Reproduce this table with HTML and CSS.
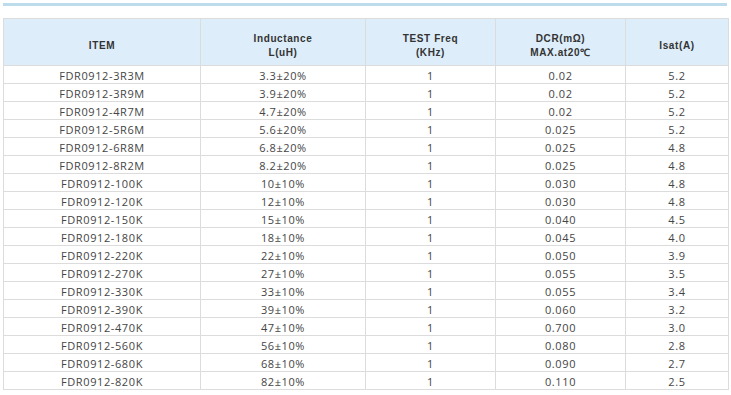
FILE: index.html
```html
<!DOCTYPE html>
<html>
<head>
<meta charset="utf-8">
<link rel="stylesheet" href="styles.css">
</head>
<body>
<div class="page">
  <div class="topline"></div>
  <table class="spec">
    <colgroup>
      <col class="c1"><col class="c2"><col class="c3"><col class="c4"><col class="c5">
    </colgroup>
    <thead>
      <tr>
        <th>ITEM</th>
        <th>Inductance<br>L(uH)</th>
        <th>TEST Freq<br>(KHz)</th>
        <th>DCR(m&Omega;)<br>MAX.at20&#8451;</th>
        <th>Isat(A)</th>
      </tr>
    </thead>
    <tbody>
      <tr><td>FDR0912-3R3M</td><td>3.3±20%</td><td>1</td><td>0.02</td><td>5.2</td></tr>
      <tr><td>FDR0912-3R9M</td><td>3.9±20%</td><td>1</td><td>0.02</td><td>5.2</td></tr>
      <tr><td>FDR0912-4R7M</td><td>4.7±20%</td><td>1</td><td>0.02</td><td>5.2</td></tr>
      <tr><td>FDR0912-5R6M</td><td>5.6±20%</td><td>1</td><td>0.025</td><td>5.2</td></tr>
      <tr><td>FDR0912-6R8M</td><td>6.8±20%</td><td>1</td><td>0.025</td><td>4.8</td></tr>
      <tr><td>FDR0912-8R2M</td><td>8.2±20%</td><td>1</td><td>0.025</td><td>4.8</td></tr>
      <tr><td>FDR0912-100K</td><td>10±10%</td><td>1</td><td>0.030</td><td>4.8</td></tr>
      <tr><td>FDR0912-120K</td><td>12±10%</td><td>1</td><td>0.030</td><td>4.8</td></tr>
      <tr><td>FDR0912-150K</td><td>15±10%</td><td>1</td><td>0.040</td><td>4.5</td></tr>
      <tr><td>FDR0912-180K</td><td>18±10%</td><td>1</td><td>0.045</td><td>4.0</td></tr>
      <tr><td>FDR0912-220K</td><td>22±10%</td><td>1</td><td>0.050</td><td>3.9</td></tr>
      <tr><td>FDR0912-270K</td><td>27±10%</td><td>1</td><td>0.055</td><td>3.5</td></tr>
      <tr><td>FDR0912-330K</td><td>33±10%</td><td>1</td><td>0.055</td><td>3.4</td></tr>
      <tr><td>FDR0912-390K</td><td>39±10%</td><td>1</td><td>0.060</td><td>3.2</td></tr>
      <tr><td>FDR0912-470K</td><td>47±10%</td><td>1</td><td>0.700</td><td>3.0</td></tr>
      <tr><td>FDR0912-560K</td><td>56±10%</td><td>1</td><td>0.080</td><td>2.8</td></tr>
      <tr><td>FDR0912-680K</td><td>68±10%</td><td>1</td><td>0.090</td><td>2.7</td></tr>
      <tr><td>FDR0912-820K</td><td>82±10%</td><td>1</td><td>0.110</td><td>2.5</td></tr>
    </tbody>
  </table>
</div>
</body>
</html>
```
FILE: styles.css
```css
html, body {
  margin: 0;
  padding: 0;
  background: #ffffff;
}
.page {
  padding: 3px 4px 0 3px;
  width: 724px;
}
.topline {
  height: 3px;
  background: #bcdcec;
  margin-bottom: 12px;
}
.spec {
  width: 725px;
  border-collapse: collapse;
  table-layout: fixed;
  font-family: "Open Sans", "DejaVu Sans", sans-serif;
  color: #454545;
}
.c1 { width: 197px; }
.c2 { width: 165px; }
.c3 { width: 130px; }
.c4 { width: 130px; }
.c5 { width: 103px; }
.spec th, .spec td {
  border: 1px solid #dcdcdc;
  text-align: center;
  padding: 0;
}
.spec th {
  background: #ddedf9;
  height: 39px;
  padding-top: 7px;
  font-family: "Liberation Sans", Arial, sans-serif;
  font-weight: bold;
  font-size: 10px;
  letter-spacing: 0.6px;
  line-height: 14px;
  color: #333;
}
.spec td {
  height: 15px;
  padding-top: 2px;
  font-size: 11px;
  line-height: 15px;
  letter-spacing: 0.6px;
}
```
